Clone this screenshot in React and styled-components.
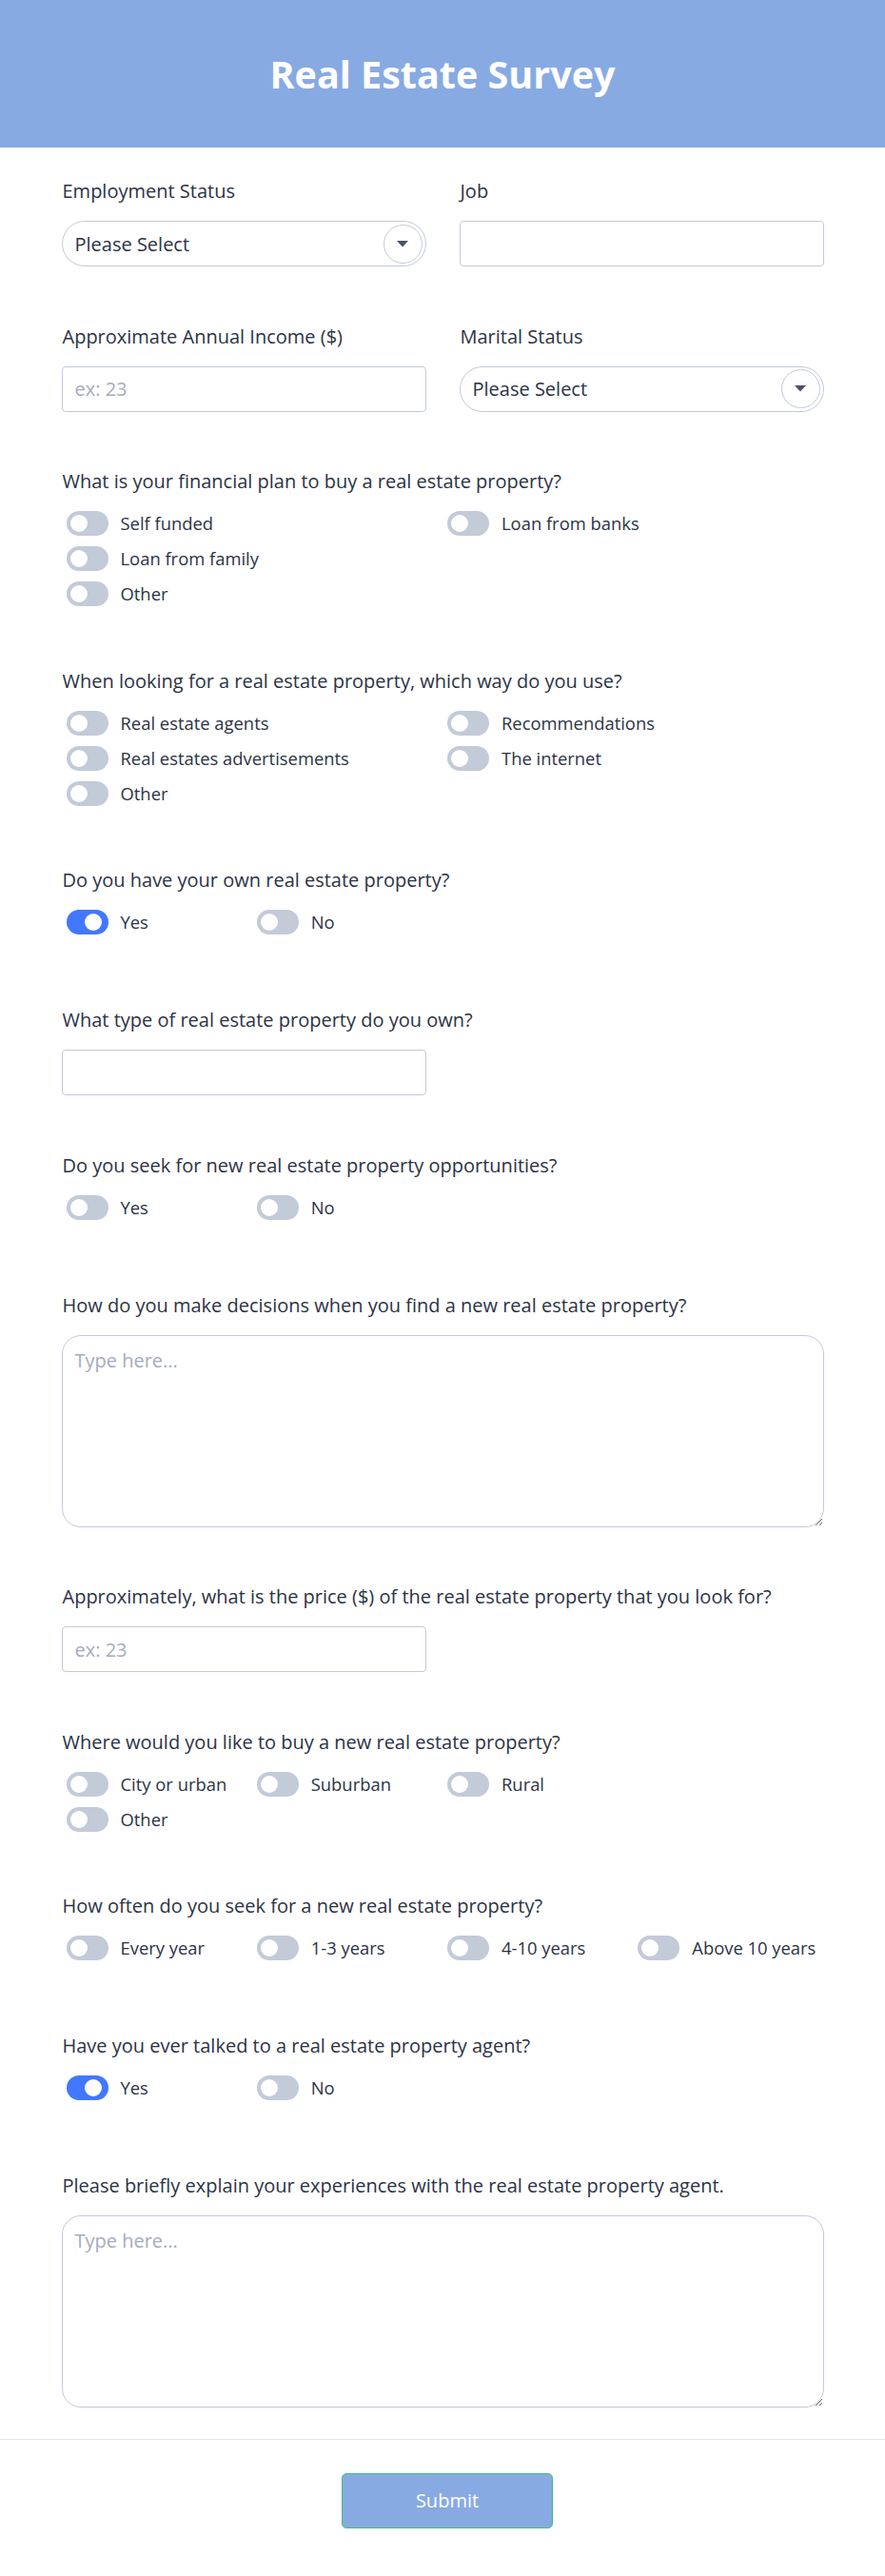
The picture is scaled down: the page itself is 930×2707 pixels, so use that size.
import React from "react";
import styled, { createGlobalStyle } from "styled-components";

const GlobalStyle = createGlobalStyle`
  html, body { margin: 0; padding: 0; background: #ffffff; }
  body { font-family: "Open Sans", "Liberation Sans", sans-serif; color: #2c3345; }
  * { box-sizing: border-box; }
`;

const Page = styled.div`
  width: 930px;
  min-height: 2707px;
  background: #ffffff;
`;

const Header = styled.header`
  height: 155px;
  background: #88aae2;
  display: flex;
  align-items: center;
  justify-content: center;
`;

const Title = styled.h1`
  margin: 0;
  font-family: "Open Sans", sans-serif;
  font-weight: 700;
  font-size: 39.5px;
  color: #ffffff;
  line-height: normal;
`;

const Form = styled.form`
  width: 801px;
  margin: 0 auto;
  padding-top: 2px;
`;

const Pair = styled.div`
  display: grid;
  grid-template-columns: 1fr 1fr;
  column-gap: 35px;
`;

const Question = styled.div`
  padding: 29px 0 29.5px;
`;

const Label = styled.label`
  display: block;
  font-size: 20px;
  line-height: 30px;
  color: #2c3345;
  margin-bottom: 16px;
  padding-left: 1px;
`;

const TextInput = styled.input`
  display: block;
  width: ${(p) => (p.$half ? "383px" : "100%")};
  height: 48px;
  border: 1px solid #c3cad8;
  border-radius: 4px;
  padding: 0 13px;
  font-family: "Open Sans", sans-serif;
  font-size: 20px;
  color: #2c3345;
  background: #fff;
  outline: none;
  &::placeholder { color: #a5acbd; }
`;

const SelectBox = styled.div`
  height: 48px;
  border: 1px solid #c3cad8;
  border-radius: 24px;
  display: flex;
  align-items: center;
  justify-content: space-between;
  padding: 0 3px 0 13px;
  background: #fff;
`;

const SelectText = styled.span`
  font-size: 20px;
  color: #2c3345;
`;

const CaretButton = styled.span`
  width: 41px;
  height: 41px;
  border-radius: 50%;
  border: 1px solid #c3cad8;
  display: flex;
  align-items: center;
  justify-content: center;
`;

const TextArea = styled.textarea`
  display: block;
  width: 100%;
  height: 202px;
  border: 1px solid #c3cad8;
  border-radius: 20px;
  padding: 11px 13px;
  font-family: "Open Sans", sans-serif;
  font-size: 20px;
  line-height: 30px;
  color: #2c3345;
  resize: vertical;
  outline: none;
  &::placeholder { color: #a5acbd; }
`;

const OptionGrid = styled.div`
  display: grid;
  grid-template-columns: repeat(${(p) => p.$cols}, 1fr);
  row-gap: 11px;
  padding-bottom: ${(p) => (p.$compact ? "5px" : "16.5px")};
`;

const Option = styled.div`
  display: flex;
  align-items: center;
  gap: 13px;
  height: 26px;
  padding-left: 5px;
`;

const Track = styled.span`
  flex: none;
  width: 44px;
  height: 26px;
  border-radius: 13px;
  background: ${(p) => (p.$on ? "#4277ff" : "#c3cad8")};
  display: flex;
  align-items: center;
  padding: 0 4px;
`;

const Knob = styled.span`
  width: 18px;
  height: 18px;
  border-radius: 50%;
  background: #ffffff;
  margin-left: ${(p) => (p.$on ? "15px" : "0")};
`;

const OptionText = styled.span`
  font-size: 18.4px;
  line-height: 30px;
  color: #2c3345;
  white-space: nowrap;
`;

const Divider = styled.hr`
  margin: 3px 0 0;
  border: none;
  border-top: 1px solid #e3e6ee;
  width: 930px;
`;

const Footer = styled.div`
  display: flex;
  justify-content: center;
  padding: 35px 0 50px 10px;
`;

const SubmitButton = styled.button`
  width: 222px;
  height: 58px;
  background: #88aae2;
  border: 1.5px solid #3fbf80;
  border-radius: 5px;
  color: #ffffff;
  font-family: "Open Sans", sans-serif;
  font-size: 20px;
`;

const Caret = () => (
  <svg width="12" height="7" viewBox="0 0 12 7" aria-hidden="true">
    <path d="M0 0 H12 L6 6.5 Z" fill="#4b5266" />
  </svg>
);

const Select = () => (
  <SelectBox>
    <SelectText>Please Select</SelectText>
    <CaretButton>
      <Caret />
    </CaretButton>
  </SelectBox>
);

const Toggle = ({ on, children }) => (
  <Option>
    <Track $on={on}>
      <Knob $on={on} />
    </Track>
    <OptionText>{children}</OptionText>
  </Option>
);

const Choices = ({ cols, compact, items }) => (
  <OptionGrid $cols={cols} $compact={compact}>
    {items.map((it, i) =>
      it === null ? (
        <span key={i} />
      ) : (
        <Toggle key={i} on={typeof it === "object" ? it.on : false}>
          {typeof it === "object" ? it.label : it}
        </Toggle>
      )
    )}
  </OptionGrid>
);

export default function App() {
  return (
    <Page>
      <GlobalStyle />
      <Header>
        <Title>Real Estate Survey</Title>
      </Header>
      <Form onSubmit={(e) => e.preventDefault()}>
        <Pair>
          <Question>
            <Label>Employment Status</Label>
            <Select />
          </Question>
          <Question>
            <Label>Job</Label>
            <TextInput type="text" />
          </Question>
        </Pair>
        <Pair>
          <Question>
            <Label>Approximate Annual Income ($)</Label>
            <TextInput type="text" placeholder="ex: 23" />
          </Question>
          <Question>
            <Label>Marital Status</Label>
            <Select />
          </Question>
        </Pair>

        <Question>
          <Label>What is your financial plan to buy a real estate property?</Label>
          <Choices
            cols={2}
            compact
            items={["Self funded", "Loan from banks", "Loan from family", null, "Other"]}
          />
        </Question>

        <Question>
          <Label>When looking for a real estate property, which way do you use?</Label>
          <Choices
            cols={2}
            compact
            items={[
              "Real estate agents",
              "Recommendations",
              "Real estates advertisements",
              "The internet",
              "Other",
            ]}
          />
        </Question>

        <Question>
          <Label>Do you have your own real estate property?</Label>
          <Choices cols={4} items={[{ label: "Yes", on: true }, "No"]} />
        </Question>

        <Question>
          <Label>What type of real estate property do you own?</Label>
          <TextInput type="text" $half />
        </Question>

        <Question>
          <Label>Do you seek for new real estate property opportunities?</Label>
          <Choices cols={4} items={["Yes", "No"]} />
        </Question>

        <Question>
          <Label>How do you make decisions when you find a new real estate property?</Label>
          <TextArea placeholder="Type here..." />
        </Question>

        <Question>
          <Label>Approximately, what is the price ($) of the real estate property that you look for?</Label>
          <TextInput type="text" $half placeholder="ex: 23" />
        </Question>

        <Question>
          <Label>Where would you like to buy a new real estate property?</Label>
          <Choices cols={4} compact items={["City or urban", "Suburban", "Rural", null, "Other"]} />
        </Question>

        <Question>
          <Label>How often do you seek for a new real estate property?</Label>
          <Choices cols={4} items={["Every year", "1-3 years", "4-10 years", "Above 10 years"]} />
        </Question>

        <Question>
          <Label>Have you ever talked to a real estate property agent?</Label>
          <Choices cols={4} items={[{ label: "Yes", on: true }, "No"]} />
        </Question>

        <Question>
          <Label>Please briefly explain your experiences with the real estate property agent.</Label>
          <TextArea placeholder="Type here..." />
        </Question>
      </Form>
      <Divider />
      <Footer>
        <SubmitButton type="button">Submit</SubmitButton>
      </Footer>
    </Page>
  );
}
